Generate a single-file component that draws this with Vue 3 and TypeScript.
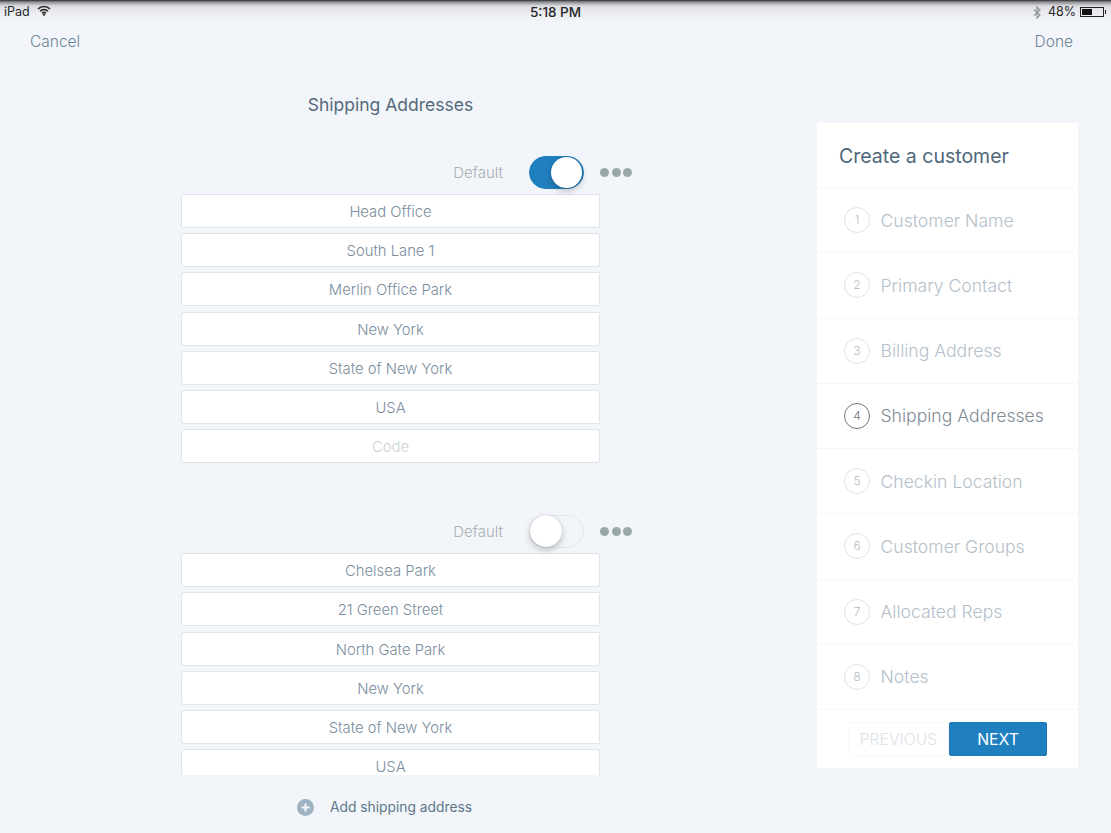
<script setup lang="ts">
interface Group { on: boolean; fields: { text: string; placeholder?: boolean }[] }
const groups: Group[] = [
  { on: true, fields: [
    { text: 'Head Office' }, { text: 'South Lane 1' }, { text: 'Merlin Office Park' }, { text: 'New York' },
    { text: 'State of New York' }, { text: 'USA' }, { text: 'Code', placeholder: true } ] },
  { on: false, fields: [
    { text: 'Chelsea Park' }, { text: '21 Green Street' }, { text: 'North Gate Park' }, { text: 'New York' },
    { text: 'State of New York' }, { text: 'USA' } ] },
]
const steps = ['Customer Name', 'Primary Contact', 'Billing Address', 'Shipping Addresses', 'Checkin Location', 'Customer Groups', 'Allocated Reps', 'Notes']
const current = 3
</script>

<template>
  <div class="page">
    <header class="status">
      <div class="status-left">
        <span>iPad</span>
        <svg width="14" height="11" viewBox="0 0 14 11"><path d="M1 4a8.5 8.5 0 0 1 12 0M3 6.2a5.4 5.4 0 0 1 8 0M5 8.2a2.6 2.6 0 0 1 4 0" fill="none" stroke="#222" stroke-width="1.5"/><circle cx="7" cy="9.6" r="1.2" fill="#222"/></svg>
      </div>
      <div class="status-time">5:18 PM</div>
      <div class="status-right">
        <svg width="8" height="13" viewBox="0 0 8 13"><path d="M1 3.5l6 5.5-3 3V1l3 3-6 5.5" fill="none" stroke="#8a8f94" stroke-width="1.1"/></svg>
        <span>48%</span>
        <div class="battery"><div class="battery-fill"></div></div>
      </div>
    </header>
    <nav class="nav"><span>Cancel</span><span>Done</span></nav>
    <div class="body">
      <main class="form">
        <h2 class="title">Shipping Addresses</h2>
        <div class="scroller">
          <section v-for="(g, i) in groups" :key="i" class="group">
            <div class="default-row">
              <span class="default-label">Default</span>
              <div class="switch" :class="{ on: g.on }"><div class="knob"></div></div>
              <div class="dots"><i></i><i></i><i></i></div>
            </div>
            <div class="fields">
              <div v-for="f in g.fields" :key="f.text" class="field" :class="{ placeholder: f.placeholder }">{{ f.text }}</div>
            </div>
          </section>
        </div>
        <div class="add">
          <svg width="17" height="17" viewBox="0 0 17 17"><circle cx="8.5" cy="8.5" r="8.5" fill="#9fb2c2"/><path d="M8.5 4.5v8M4.5 8.5h8" stroke="#f2f5f9" stroke-width="2.2"/></svg>
          <span>Add shipping address</span>
        </div>
      </main>
      <aside class="panel">
        <div class="panel-head">Create a customer</div>
        <div v-for="(s, i) in steps" :key="s" class="step" :class="{ current: i === current }">
          <span class="num">{{ i + 1 }}</span>
          <span class="step-label">{{ s }}</span>
        </div>
        <div class="panel-foot">
          <button class="btn prev">PREVIOUS</button>
          <button class="btn next">NEXT</button>
        </div>
      </aside>
    </div>
  </div>
</template>

<style>
html, body { margin: 0; background: #f2f5f9; }
</style>

<style scoped>
.page { width: 1111px; height: 833px; overflow: hidden; background: #f2f5f9; font-family: Inter, "Noto Sans", sans-serif; font-weight: 300; display: flex; flex-direction: column; }
.status { height: 23px; flex: none; box-sizing: border-box; padding: 4px 6px 0 4px; display: flex; justify-content: space-between; font-size: 12.5px; font-weight: 400; color: #26282b; line-height: 16px; background: linear-gradient(#2b2c2e 0, #8e8f92 2px, #dcdde0 6px, #e9ebee 12px, #f2f5f9 22px); position: relative; }
.status-left { display: flex; gap: 7px; align-items: flex-start; }
.status-left svg { margin-top: 1px; }
.status-time { position: absolute; left: 0; right: 0; top: 4px; text-align: center; font-weight: 500; font-size: 13.5px; }
.status-right { display: flex; align-items: flex-start; gap: 4px; }
.status-right svg { margin: 2px 3px 0 0; }
.battery { width: 24px; height: 10px; border: 1px solid #222; box-sizing: border-box; margin-top: 3px; padding: 1px; position: relative; margin-right: 1px; }
.battery::after { content: ""; position: absolute; right: -3px; top: 2px; width: 1px; height: 4px; background: #222; }
.battery-fill { width: 48%; height: 100%; background: #111; }
.nav { height: 38px; flex: none; box-sizing: border-box; padding: 9px 38px 0 30px; display: flex; justify-content: space-between; font-size: 15.5px; line-height: 20px; color: #6f8597; }
.body { flex: 1; display: flex; min-height: 0; }
.form { width: 451px; margin-left: 181px; flex: none; display: flex; flex-direction: column; }
.title { width: 419px; margin: 32px 0 0; font-size: 17.5px; line-height: 24px; font-weight: 400; color: #54697c; text-align: center; }
.scroller { height: 625px; margin-top: 33px; overflow: hidden; flex: none; }
.group { margin-bottom: 46px; }
.default-row { height: 44px; display: flex; align-items: center; justify-content: flex-end; }
.default-label { font-size: 15px; color: #a9b0b6; margin-right: 26px; }
.switch { width: 55px; height: 33px; box-sizing: border-box; border-radius: 17px; border: 1px solid #e3e7eb; background: #f2f5f9; position: relative; }
.switch.on { background: #1f7fbf; border-color: #1f7fbf; }
.knob { position: absolute; left: 0; top: -1px; width: 32px; height: 32px; border-radius: 50%; background: #fff; box-shadow: 0 3px 7px rgba(0,0,0,.22), 0 0 1px rgba(0,0,0,.3); }
.switch.on .knob { left: 21px; top: 0; width: 31px; height: 31px; }
.dots { display: flex; gap: 2.5px; margin-left: 16px; }
.dots i { width: 9px; height: 9px; border-radius: 50%; background: #99a9a9; }
.fields { width: 419px; display: flex; flex-direction: column; gap: 5.2px; }
.field { height: 34px; box-sizing: border-box; background: #fff; border: 1px solid #dfe5ea; border-radius: 2px; text-align: center; font-size: 14.8px; line-height: 34px; color: #7a8d9e; }
.field.placeholder { color: #ccd3d9; }
.add { width: 419px; height: 52px; margin-top: 6px; flex: none; display: flex; align-items: center; font-size: 13.8px; font-weight: 400; color: #60758a; padding-left: 116px; box-sizing: border-box; gap: 16px; }
.panel { width: 261px; margin: 62px 0 0 185px; height: 645px; flex: none; background: #fff; display: flex; flex-direction: column; }
.panel-head { height: 65px; flex: none; box-sizing: border-box; padding-left: 22px; font-size: 19.5px; line-height: 67px; font-weight: 400; color: #4f677b; border-bottom: 1px solid #f5f7f9; }
.step { height: 65.25px; flex: none; box-sizing: border-box; display: flex; align-items: center; padding: 0 0 0 27px; border-bottom: 1px solid #f5f7f9; color: #b4c0ca; }
.num { width: 26px; height: 26px; box-sizing: border-box; border: 1px solid #dfe3e6; border-radius: 50%; font-size: 12px; text-align: center; line-height: 24px; color: #b3b9bf; margin-right: 10.5px; }
.step-label { font-size: 17.6px; }
.step.current { color: #7f8b95; }
.step.current .num { border-color: #70787e; color: #70787e; }
.panel-foot { flex: 1; display: flex; padding: 12px 0 0 31px; align-items: flex-start; }
.btn { height: 34px; font: inherit; font-size: 15.8px; box-sizing: border-box; border-radius: 2px; padding: 0; }
.prev { width: 101px; background: #fff; border: 1px solid #f7f8fa; color: #dde2e7; }
.next { width: 98px; background: #1f7fbf; border: 1px solid #1c79b7; color: #fff; font-weight: 400; }
</style>
